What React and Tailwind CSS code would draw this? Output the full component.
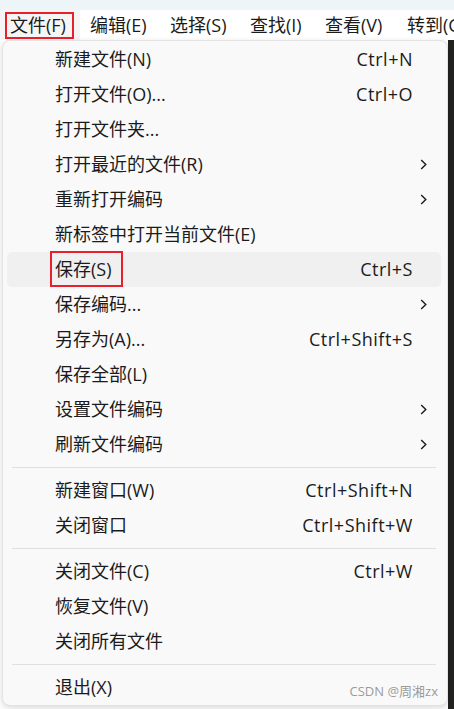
import React from 'react'

const menuBar = [
  { label: '文件(F)', w: 'w-[80px]', active: true },
  { label: '编辑(E)', w: 'w-[80px]' },
  { label: '选择(S)', w: 'w-[80px]' },
  { label: '查找(I)', w: 'w-[75px]' },
  { label: '查看(V)', w: 'w-[82px]' },
  { label: '转到(G)', w: 'w-[82px]' },
]

const groups = [
  [
    { label: '新建文件(N)', key: 'Ctrl+N' },
    { label: '打开文件(O)...', key: 'Ctrl+O' },
    { label: '打开文件夹...' },
    { label: '打开最近的文件(R)', sub: true },
    { label: '重新打开编码', sub: true },
    { label: '新标签中打开当前文件(E)' },
    { label: '保存(S)', key: 'Ctrl+S', hover: true },
    { label: '保存编码...', sub: true },
    { label: '另存为(A)...', key: 'Ctrl+Shift+S' },
    { label: '保存全部(L)' },
    { label: '设置文件编码', sub: true },
    { label: '刷新文件编码', sub: true },
  ],
  [
    { label: '新建窗口(W)', key: 'Ctrl+Shift+N' },
    { label: '关闭窗口', key: 'Ctrl+Shift+W' },
  ],
  [
    { label: '关闭文件(C)', key: 'Ctrl+W' },
    { label: '恢复文件(V)' },
    { label: '关闭所有文件' },
  ],
  [{ label: '退出(X)' }],
]

const Chevron = () => (
  <svg width="7" height="11" viewBox="0 0 7 11" fill="none">
    <path d="M1.2 1 L5.8 5.5 L1.2 10" stroke="#1b1b1b" strokeWidth="1.4" />
  </svg>
)

const MenuRow = ({ item }) => (
  <div
    className={
      'relative h-[35px] ml-[4px] mr-[6px] pl-[48px] flex items-center rounded-[5px] ' +
      (item.hover ? 'bg-[#f0f0f0]' : '')
    }
  >
    <span className="flex-1">{item.label}</span>
    {item.key && <span className="tracking-[0.5px]">{item.key}</span>}
    <span className="w-[28px] pl-[7px] flex items-center">{item.sub && <Chevron />}</span>
    {item.hover && (
      <div className="absolute left-[43px] top-[-1px] w-[73px] h-[36px] border-2 border-[#e8202c]" />
    )}
  </div>
)

const App = () => {
  return (
    <div className="w-[454px] h-[709px] overflow-hidden flex flex-col bg-[#222220] text-[18px] text-[#1b1b1b] font-['Open_Sans','Noto_Sans_CJK_SC',sans-serif]">
      <div className="h-[10px] bg-[#eef5f9]" />
      <div className="h-[30px] bg-white flex items-center">
        {menuBar.map((m) => (
          <div
            key={m.label}
            className={'h-[30px] shrink-0 flex items-center pl-[10px] whitespace-nowrap ' + m.w + (m.active ? ' relative bg-[#f5f5f5]' : '')}
          >
            {m.label}
            {m.active && (
              <div className="absolute left-[5px] top-[2px] w-[69px] h-[27px] border-2 border-[#e8202c]" />
            )}
          </div>
        ))}
      </div>
      <div className="flex-1 flex bg-white">
        <div className="relative ml-[2px] w-[446px] h-[666px] bg-[#f9f9f9] border border-[#e3e3e3] rounded-[8px] pt-[1px] shadow-[0_2px_6px_rgba(0,0,0,0.15)]">
          {groups.map((g, gi) => (
            <div key={gi}>
              {gi > 0 && (
                <div className="py-[5px] ml-[9px] mr-[11px]">
                  <div className="h-px bg-[#e0e0e0]" />
                </div>
              )}
              {g.map((item) => (
                <MenuRow key={item.label} item={item} />
              ))}
            </div>
          ))}
          <div className="absolute right-[9px] bottom-[4px] text-[13px] text-[#9b9b9b]">CSDN @周湘zx</div>
        </div>
        <div className="flex-1 bg-[#222220]" />
      </div>
    </div>
  )
}

export default App
